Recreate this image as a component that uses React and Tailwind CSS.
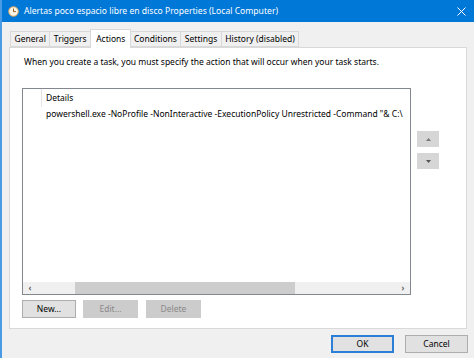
import React from 'react';

const tabs = ['General', 'Triggers', 'Actions', 'Conditions', 'Settings', 'History (disabled)'];

function ClockIcon() {
    return (
        <svg width="11" height="11" viewBox="0 0 11 11">
            <circle cx="5.5" cy="5.5" r="4.8" fill="#fbf3e4" stroke="#d9a35c" strokeWidth="1" />
            <path d="M5.5 2.6 V5.6 H7.8" stroke="#8a5a1c" strokeWidth="1" fill="none" />
        </svg>
    );
}

function Btn({ children, className = '', disabled = false, primary = false }) {
    return (
        <div
            className={
                'flex items-center justify-center h-[18px] text-[8.5px] ' +
                (disabled
                    ? 'bg-[#cccccc] border border-[#cccccc] text-[#8a8a8a] '
                    : primary
                    ? 'bg-[#e1e1e1] border-2 border-[#2c7fd6] text-black '
                    : 'bg-[#e1e1e1] border border-[#adadad] text-black ') +
                className
            }
        >
            {children}
        </div>
    );
}

export default function App() {
    return (
        <div
            className="w-[474px] h-[358px] bg-[#f0f0f0] border-l-2 border-[#4a9be6] flex flex-col overflow-hidden"
            style={{ fontFamily: '"Noto Sans", "Open Sans", sans-serif' }}
        >
            {/* title bar */}
            <div className="h-[22px] bg-[#0078d7] flex items-center pl-[6px] pr-[6px] text-white shrink-0">
                <ClockIcon />
                <span className="ml-[5px] text-[8.6px]">
                    Alertas poco espacio libre en disco Properties (Local Computer)
                </span>
                <svg className="ml-auto mr-[2px]" width="9" height="9" viewBox="0 0 9 9">
                    <path d="M0.5 0.5 L8.5 8.5 M8.5 0.5 L0.5 8.5" stroke="#fff" strokeWidth="1" />
                </svg>
            </div>

            <div className="pt-[6px] pl-[7px]">
                {/* tabs */}
                <div className="flex items-end h-[19px] pl-[1px]">
                    {tabs.map((t) => (
                        <div
                            key={t}
                            className={
                                t === 'Actions'
                                    ? 'relative z-10 h-[19px] -mb-px bg-white border border-b-0 border-[#d9d9d9] px-[5px] flex items-center text-[8.5px] -mx-px'
                                    : 'h-[16px] bg-[#f0f0f0] border border-[#d9d9d9] -ml-px first:ml-0 px-[3.5px] flex items-center text-[8.5px]'
                            }
                        >
                            {t}
                        </div>
                    ))}
                </div>

                {/* panel */}
                <div className="w-[458px] h-[282px] bg-white border border-[#d9d9d9] pl-[12px] pt-[8px]">
                    <p className="text-[8.5px] leading-[12px] pl-[2px]">
                        When you create a task, you must specify the action that will occur when your task starts.
                    </p>

                    <div className="flex mt-[20px]">
                        <div className="w-[389px] h-[207px] border border-[#828790] flex flex-col">
                            <div className="flex h-[18px] shrink-0">
                                <div className="w-[19px] border-r border-[#e5e5e5]" />
                                <div className="pl-[4px] text-[8.5px] flex items-center">Details</div>
                            </div>
                            <div className="pl-[23px] text-[8.5px] h-[15px] flex items-center whitespace-nowrap overflow-hidden">
                                powershell.exe -NoProfile -NonInteractive -ExecutionPolicy Unrestricted -Command "&amp; C:\
                            </div>
                            <div className="flex-1" />
                            <div className="h-[12px] bg-[#f0f0f0] flex items-center shrink-0">
                                <div className="w-[14px] text-[8px] leading-none flex justify-center font-bold text-[#606060]">‹</div>
                                <div className="ml-[38px] w-[220px] h-full bg-[#cdcdcd]" />
                                <div className="ml-auto w-[14px] text-[8px] leading-none flex justify-center font-bold text-[#606060]">›</div>
                            </div>
                        </div>

                        <div className="ml-[6px] mt-[43px] flex flex-col gap-[6px]">
                            <div className="w-[22px] h-[16px] bg-[#d6d6d6] flex items-center justify-center">
                                <svg width="5" height="3" viewBox="0 0 5 3"><path d="M0 3 L2.5 0 L5 3 Z" fill="#777" /></svg>
                            </div>
                            <div className="w-[22px] h-[16px] bg-[#d6d6d6] flex items-center justify-center">
                                <svg width="5" height="3" viewBox="0 0 5 3"><path d="M0 0 L2.5 3 L5 0 Z" fill="#555" /></svg>
                            </div>
                        </div>
                    </div>

                    <div className="flex mt-[5px]">
                        <Btn className="w-[54px]">New...</Btn>
                        <Btn className="w-[55px] ml-[7px]" disabled>Edit...</Btn>
                        <Btn className="w-[55px] ml-[8px]" disabled>Delete</Btn>
                    </div>
                </div>

                {/* footer */}
                <div className="flex justify-end mt-[6px] pr-[6px]">
                    <Btn className="w-[63px]" primary>OK</Btn>
                    <Btn className="w-[63px] ml-[11px]">Cancel</Btn>
                </div>
            </div>
        </div>
    );
}
